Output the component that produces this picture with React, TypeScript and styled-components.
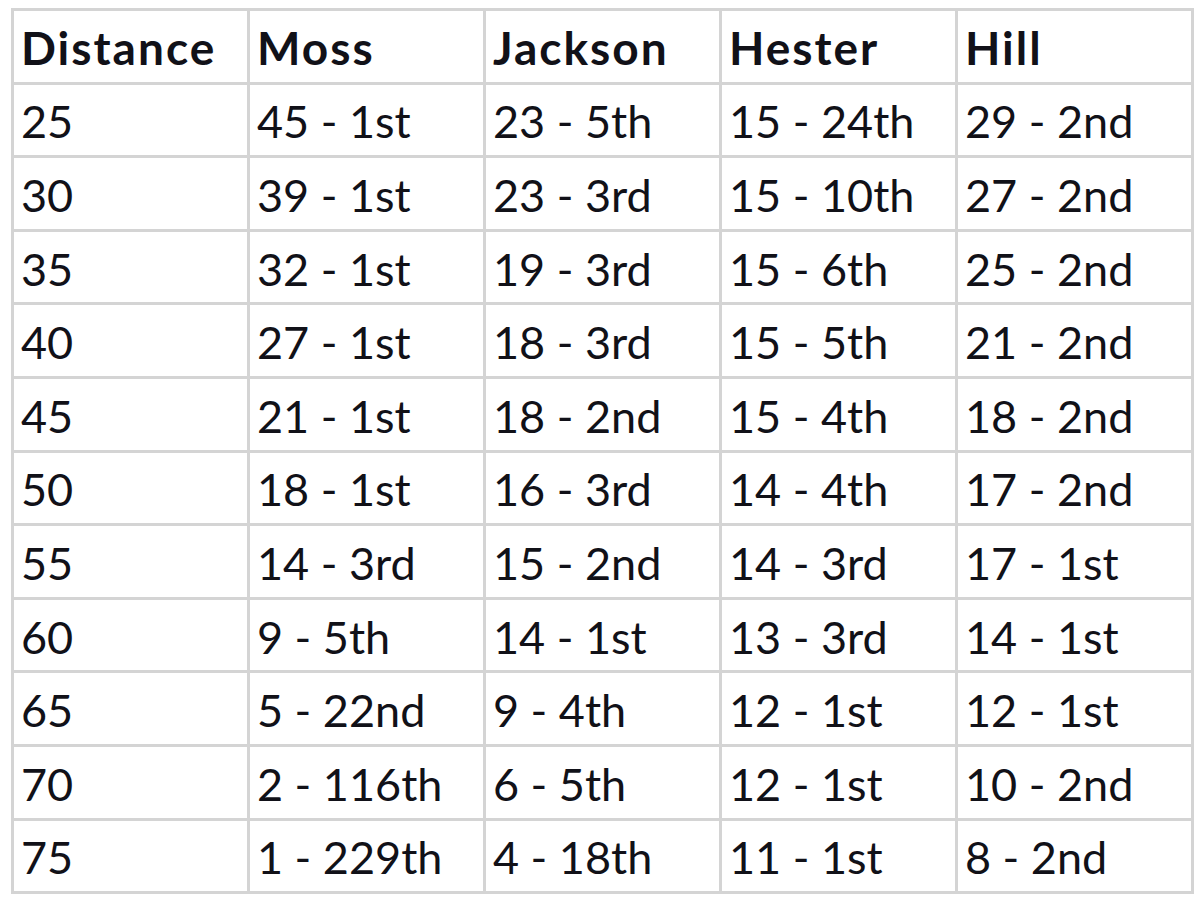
import React from 'react';
import styled, { createGlobalStyle } from 'styled-components';

const GlobalStyle = createGlobalStyle`
  html, body {
    margin: 0;
    padding: 0;
    background: #ffffff;
  }
`;

const HEADERS = ['Distance', 'Moss', 'Jackson', 'Hester', 'Hill'];

const ROWS: string[][] = [
  ['25', '45 - 1st', '23 - 5th', '15 - 24th', '29 - 2nd'],
  ['30', '39 - 1st', '23 - 3rd', '15 - 10th', '27 - 2nd'],
  ['35', '32 - 1st', '19 - 3rd', '15 - 6th', '25 - 2nd'],
  ['40', '27 - 1st', '18 - 3rd', '15 - 5th', '21 - 2nd'],
  ['45', '21 - 1st', '18 - 2nd', '15 - 4th', '18 - 2nd'],
  ['50', '18 - 1st', '16 - 3rd', '14 - 4th', '17 - 2nd'],
  ['55', '14 - 3rd', '15 - 2nd', '14 - 3rd', '17 - 1st'],
  ['60', '9 - 5th', '14 - 1st', '13 - 3rd', '14 - 1st'],
  ['65', '5 - 22nd', '9 - 4th', '12 - 1st', '12 - 1st'],
  ['70', '2 - 116th', '6 - 5th', '12 - 1st', '10 - 2nd'],
  ['75', '1 - 229th', '4 - 18th', '11 - 1st', '8 - 2nd'],
];

const App: React.FC = () => {
  return (
    <>
      <GlobalStyle />
      <Page>
        <Sheet>
          <colgroup>
            {HEADERS.map((h) => (
              <col key={h} style={{ width: 236 }} />
            ))}
          </colgroup>
          <thead>
            <Row>
              {HEADERS.map((h) => (
                <HeadCell key={h}>{h}</HeadCell>
              ))}
            </Row>
          </thead>
          <tbody>
            {ROWS.map((r) => (
              <Row key={r[0]}>
                {r.map((v, i) => (
                  <Cell key={i}>{v}</Cell>
                ))}
              </Row>
            ))}
          </tbody>
        </Sheet>
      </Page>
    </>
  );
};

const Page = styled.div`
  padding: 8px 0 0 11px;
`;

const Sheet = styled.table`
  border-collapse: collapse;
  table-layout: fixed;
  width: 1178px;
  font-family: Lato, 'Open Sans', sans-serif;
  color: #111118;
`;

const Row = styled.tr`
  height: 73.6px;
`;

const Cell = styled.td`
  border: 3px solid #d4d4d4;
  padding: 4px 0 0 7px;
  font-size: 45px;
  font-weight: 400;
  white-space: nowrap;
  vertical-align: middle;
  line-height: 1;
`;

const HeadCell = styled(Cell).attrs({ as: 'th' })`
  font-size: 46px;
  font-weight: 700;
  letter-spacing: 2px;
  text-align: left;
`;

export default App;
